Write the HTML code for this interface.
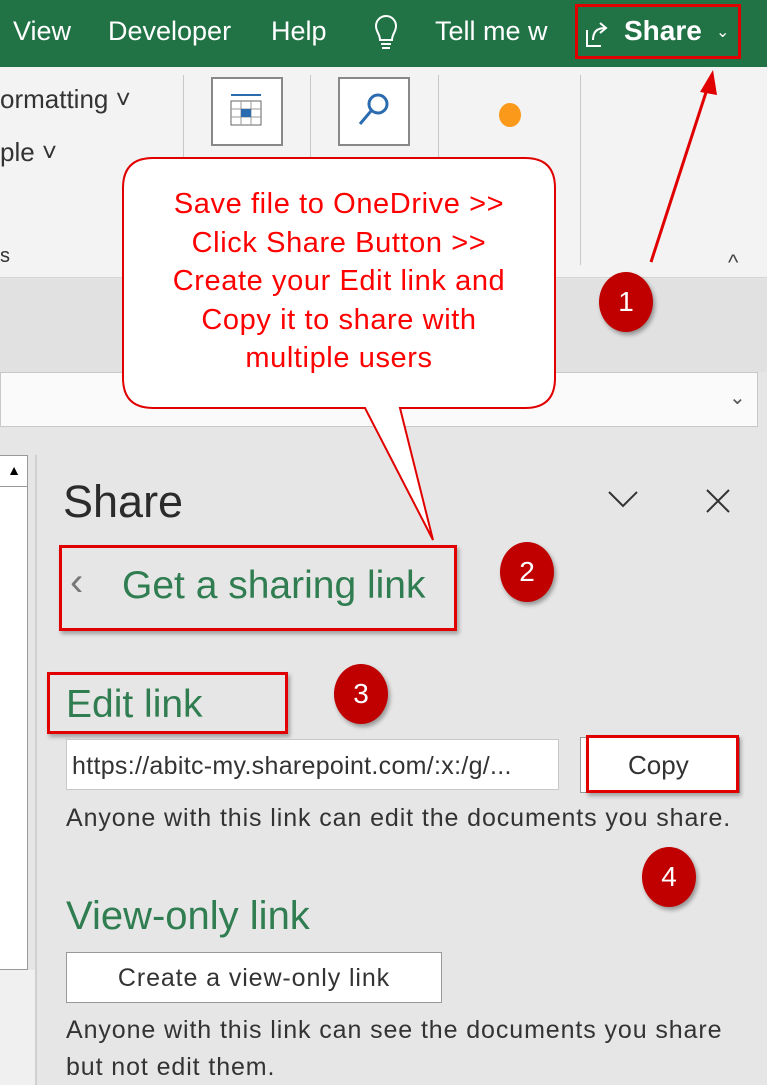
<!DOCTYPE html>
<html><head><meta charset="utf-8"><style>
*{margin:0;padding:0;box-sizing:border-box}
body{width:767px;height:1085px;overflow:hidden;position:relative;background:#e6e6e6;font-family:"Liberation Sans",sans-serif}
.a{position:absolute;white-space:nowrap}
.g{color:#2f7d50}
.t{font-size:25px;letter-spacing:0.9px;color:#333}
.badge{position:absolute;width:54px;height:60px;border-radius:50%;background:#c00000;color:#fff;font-size:28px;text-align:center;line-height:60px;box-shadow:2px 3px 4px rgba(0,0,0,.35)}
.rb{position:absolute;border:3px solid #e00000;box-shadow:2px 3px 4px rgba(0,0,0,.3)}
</style></head><body>
<div class="a" style="left:0;top:0;width:767px;height:67px;background:#217346"></div>
<div class="a" style="left:13px;top:16px;color:#fff;font-size:27px">View</div>
<div class="a" style="left:108px;top:16px;color:#fff;font-size:27px">Developer</div>
<div class="a" style="left:271px;top:16px;color:#fff;font-size:27px">Help</div>
<svg class="a" style="left:374px;top:14px" width="24" height="38" viewBox="0 0 24 38"><path d="M6 26 C6 20 2 18 2 12 A10 10 0 0 1 22 12 C22 18 18 20 18 26 Z M7 30h10 M8 34h8" fill="none" stroke="#fff" stroke-width="2"/></svg>
<div class="a" style="left:435px;top:16px;color:#fff;font-size:27px;width:113px;overflow:hidden">Tell me what</div>
<div class="a" style="left:575px;top:4px;width:166px;height:55px;border:3px solid #e00000"></div>
<svg class="a" style="left:585px;top:20px" width="26" height="28" viewBox="0 0 26 28"><path d="M2 10v16h14 M8 20c0-8 4-12 12-12 M15 3l6 5-6 5" fill="none" stroke="#fff" stroke-width="2"/></svg>
<div class="a" style="left:624px;top:15px;color:#fff;font-size:28px;font-weight:bold">Share</div>
<div class="a" style="left:716px;top:22px;color:#fff;font-size:16px">⌄</div>

<div class="a" style="left:0;top:67px;width:767px;height:211px;background:#f3f3f3;border-bottom:1px solid #d4d4d4"></div>
<div class="a" style="left:0;top:84px;font-size:26px;color:#333">ormatting ˅</div>
<div class="a" style="left:0;top:137px;font-size:26px;color:#333">ple ˅</div>
<div class="a" style="left:0;top:245px;font-size:20px;color:#333">s</div>
<div class="a" style="left:183px;top:75px;width:1px;height:190px;background:#c8c8c8"></div>
<div class="a" style="left:310px;top:75px;width:1px;height:190px;background:#c8c8c8"></div>
<div class="a" style="left:438px;top:75px;width:1px;height:190px;background:#c8c8c8"></div>
<div class="a" style="left:580px;top:75px;width:1px;height:190px;background:#c8c8c8"></div>
<div class="a" style="left:211px;top:77px;width:72px;height:69px;background:#fff;border:2px solid #888"></div>
<svg class="a" style="left:229px;top:92px" width="36" height="38" viewBox="0 0 36 38"><path d="M2 3h30" stroke="#2b6cb0" stroke-width="2"/><rect x="2" y="9" width="30" height="24" fill="#fff" stroke="#666"/><path d="M2 17h30M2 25h30M12 9v24M22 9v24" stroke="#999"/><rect x="12" y="17" width="10" height="8" fill="#2b6cb0"/></svg>
<div class="a" style="left:338px;top:77px;width:72px;height:69px;background:#fff;border:2px solid #888"></div>
<svg class="a" style="left:354px;top:90px" width="40" height="40" viewBox="0 0 40 40"><circle cx="24" cy="14" r="9" fill="none" stroke="#2b6cb0" stroke-width="3"/><path d="M17 21L6 34" stroke="#2b6cb0" stroke-width="3"/></svg>
<div class="a" style="left:499px;top:103px;width:22px;height:24px;border-radius:50%;background:#fb9a1a"></div>
<div class="a" style="left:728px;top:250px;font-size:22px;color:#444">^</div>

<div class="a" style="left:0;top:279px;width:767px;height:93px;background:#e1e1e1"></div>
<div class="a" style="left:0;top:372px;width:758px;height:55px;background:#fafafa;border:1px solid #c8c8c8"></div>
<div class="a" style="left:729px;top:385px;font-size:20px;color:#555">⌄</div>

<div class="a" style="left:0;top:455px;width:28px;height:515px;background:#fff;border:1px solid #999;border-left:none"></div>
<div class="a" style="left:0;top:455px;width:28px;height:32px;border-bottom:1px solid #999;font-size:14px;text-align:center;line-height:30px">▲</div>
<div class="a" style="left:0;top:970px;width:36px;height:115px;background:#f0f0f0"></div>
<div class="a" style="left:35px;top:455px;width:2px;height:630px;background:#d0d0d0"></div>

<div class="a" style="left:63px;top:476px;font-size:45px;color:#2b2b2b">Share</div>
<svg class="a" style="left:607px;top:488px" width="32" height="24" viewBox="0 0 32 24"><path d="M2 4l14 14L30 4" fill="none" stroke="#333" stroke-width="2"/></svg>
<svg class="a" style="left:704px;top:487px" width="28" height="28" viewBox="0 0 28 28"><path d="M3 3l22 22M25 3L3 25" stroke="#333" stroke-width="2"/></svg>
<div class="rb" style="left:59px;top:545px;width:398px;height:86px"></div>
<div class="a" style="left:70px;top:560px;font-size:40px;color:#777">‹</div>
<div class="a g" style="left:122px;top:564px;font-size:39px">Get a sharing link</div>

<div class="rb" style="left:47px;top:672px;width:241px;height:62px"></div>
<div class="a g" style="left:66px;top:683px;font-size:39px">Edit link</div>
<div class="a t" style="left:66px;top:739px;width:493px;height:51px;background:#fff;border:1px solid #c8c8c8;letter-spacing:0.3px;padding:12px 0 0 5px;overflow:hidden">https://abitc-my.sharepoint.com/:x:/g/...</div>
<div class="a" style="left:580px;top:737px;width:160px;height:56px;background:#fff;border:1px solid #999"></div>
<div class="rb" style="left:586px;top:735px;width:153px;height:58px"></div>
<div class="a" style="left:628px;top:750px;font-size:26px;color:#333">Copy</div>
<div class="a t" style="left:66px;top:804px">Anyone with this link can edit the documents you share.</div>

<div class="a g" style="left:66px;top:894px;font-size:40px">View-only link</div>
<div class="a t" style="left:66px;top:952px;width:376px;height:51px;background:#fff;border:1px solid #999;text-align:center;line-height:50px">Create a view-only link</div>
<div class="a t" style="left:66px;top:1016px">Anyone with this link can see the documents you share</div>
<div class="a t" style="left:66px;top:1053px">but not edit them.</div>

<svg class="a" style="left:0;top:0" width="767" height="1085" viewBox="0 0 767 1085">
<path d="M153 158H525Q555 158 555 188V378Q555 408 525 408H400L433 540L365 408H153Q123 408 123 378V188Q123 158 153 158Z" fill="#fff" stroke="#e00000" stroke-width="2"/>
<path d="M651 262L710 80" stroke="#e00000" stroke-width="3"/>
<path d="M713 70L700 92L717 95Z" fill="#e00000"/>
</svg>
<div class="a" style="left:123px;top:185px;width:432px;text-align:center;font-size:29px;letter-spacing:0.6px;line-height:38.5px;color:#f00;white-space:normal">Save file to OneDrive &gt;&gt;<br>Click Share Button &gt;&gt;<br>Create your Edit link and<br>Copy it to share with<br>multiple users</div>

<div class="badge" style="left:599px;top:272px">1</div>
<div class="badge" style="left:500px;top:542px">2</div>
<div class="badge" style="left:334px;top:664px">3</div>
<div class="badge" style="left:642px;top:847px">4</div>
</body></html>
